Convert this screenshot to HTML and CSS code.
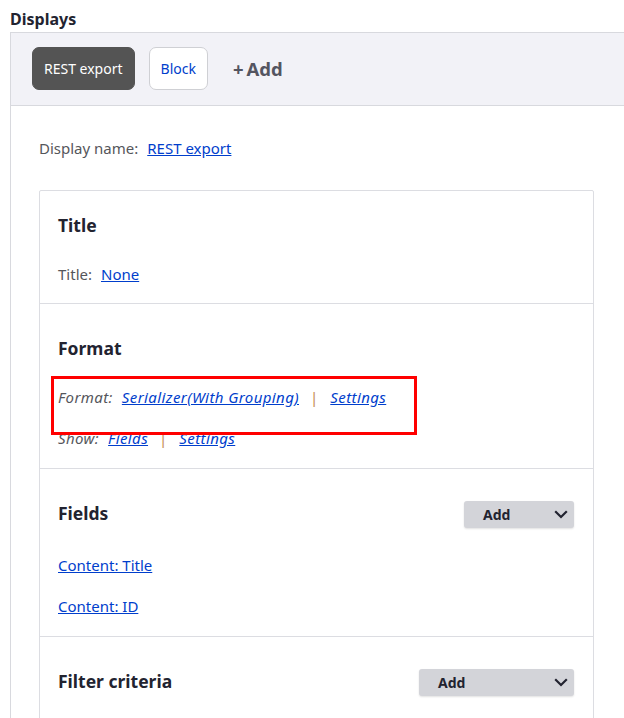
FILE: index.html
```html
<!DOCTYPE html>
<html lang="en">
<head>
<meta charset="utf-8">
<title>Displays</title>
<link rel="stylesheet" href="styles.css">
</head>
<body>
<div class="page">
  <h2 class="page-title">Displays</h2>
  <div class="tabs">
    <a class="tab tab-active">REST export</a>
    <a class="tab tab-plain">Block</a>
    <a class="tab-add"><span class="plus">+</span>Add</a>
  </div>
  <div class="panel">
    <div class="display-name"><span class="label">Display name:</span><a class="link" href="#">REST export</a></div>
    <div class="card">
      <section class="sec sec-first">
        <div class="sec-head"><h3>Title</h3></div>
        <div class="line"><span class="label">Title:</span><a class="link" href="#">None</a></div>
      </section>
      <section class="sec sec-format">
        <div class="sec-head"><h3>Format</h3></div>
        <div class="line italic"><span class="label">Format:</span><a class="link" href="#">Serializer(With Grouping)</a><span class="sep">|</span><a class="link" href="#">Settings</a></div>
        <div class="line italic line-next"><span class="label">Show:</span><a class="link" href="#">Fields</a><span class="sep">|</span><a class="link" href="#">Settings</a></div>
        <div class="highlight"></div>
      </section>
      <section class="sec">
        <div class="sec-head"><h3>Fields</h3>
          <button class="dropbtn dropbtn-sm">Add<svg width="14" height="9" viewBox="0 0 14 9"><polyline points="1.2,1.2 7,7 12.8,1.2" fill="none" stroke="#222330" stroke-width="2.2"/></svg></button>
        </div>
        <div class="line line-links"><a class="link" href="#">Content: Title</a></div>
        <div class="line line-next"><a class="link" href="#">Content: ID</a></div>
      </section>
      <section class="sec sec-last">
        <div class="sec-head"><h3>Filter criteria</h3>
          <button class="dropbtn dropbtn-lg">Add<svg width="14" height="9" viewBox="0 0 14 9"><polyline points="1.2,1.2 7,7 12.8,1.2" fill="none" stroke="#222330" stroke-width="2.2"/></svg></button>
        </div>
      </section>
    </div>
  </div>
</div>
</body>
</html>
```
FILE: styles.css
```css
html, body {
  margin: 0;
  padding: 0;
  background: #ffffff;
  overflow: hidden;
}
body {
  font-family: "Noto Sans", "Open Sans", sans-serif;
  font-size: 15px;
  color: #55565b;
}
.page {
  padding-left: 10px;
}
.page-title {
  margin: 9px 0 3px 0;
  font-size: 16px;
  line-height: 20px;
  font-weight: 700;
  color: #222330;
}
.tabs {
  display: flex;
  align-items: center;
  width: 700px;
  height: 43px;
  padding: 14px 0 15px 21px;
  background: #f2f2f7;
  border: 1px solid #d8d9de;
  border-right: none;
}
.tab {
  display: flex;
  align-items: center;
  height: 43px;
  box-sizing: border-box;
  border-radius: 7px;
  padding: 0 11px;
  font-size: 14px;
}
.tab-active {
  background: #545454;
  color: #ffffff;
  border: 1px solid #545454;
}
.tab-plain {
  margin-left: 14px;
  background: #ffffff;
  color: #003ecc;
  border: 1px solid #cfd0d4;
}
.tab-add {
  margin-left: 25px;
  font-size: 18.5px;
  font-weight: 700;
  color: #545560;
}
.plus {
  margin-right: 3px;
}
.panel {
  width: 700px;
  border-left: 1px solid #d8d9de;
  padding: 32px 0 40px 28px;
}
.display-name, .line {
  line-height: 20px;
  white-space: nowrap;
}
.label {
  margin-right: 9px;
}
.link {
  color: #003ecc;
  text-decoration: underline;
}
.card {
  margin-top: 32px;
  width: 555px;
  box-sizing: border-box;
  border: 1px solid #dcdde2;
  border-radius: 2px;
}
.sec {
  position: relative;
  padding: 34px 19px 20px 18px;
  border-top: 1px solid #dcdde2;
}
.sec-first {
  border-top: none;
  padding-top: 24px;
  padding-bottom: 19px;
}
.sec-last {
  padding-bottom: 60px;
}
.sec-head {
  display: flex;
  align-items: center;
  justify-content: space-between;
  height: 20px;
}
.sec-head h3 {
  margin: 0;
  font-size: 17.5px;
  line-height: 20px;
  font-weight: 700;
  color: #222330;
}
.line {
  margin-top: 29px;
}
.line-next {
  margin-top: 21px;
}
.line-links {
  margin-top: 32px;
}
.italic {
  font-style: italic;
  letter-spacing: 0.4px;
}
.sep {
  color: #c48a4e;
  font-style: normal;
  letter-spacing: 0;
  margin: 0 12px 0 11px;
}
.dropbtn {
  display: flex;
  align-items: center;
  justify-content: space-between;
  box-sizing: border-box;
  height: 27px;
  margin-top: 3px;
  padding: 0 6px 0 19px;
  border: none;
  border-radius: 3px;
  background: #d3d4d9;
  box-shadow: 0 1px 2px rgba(0, 0, 0, 0.12);
  font-family: "Noto Sans", "Open Sans", sans-serif;
  font-size: 14px;
  font-weight: 700;
  color: #222330;
}
.dropbtn-sm {
  width: 110px;
}
.dropbtn-lg {
  width: 155px;
}
.highlight {
  position: absolute;
  left: 11px;
  top: 72px;
  width: 366px;
  height: 59px;
  box-sizing: border-box;
  border: 3px solid #ff0000;
}
```
